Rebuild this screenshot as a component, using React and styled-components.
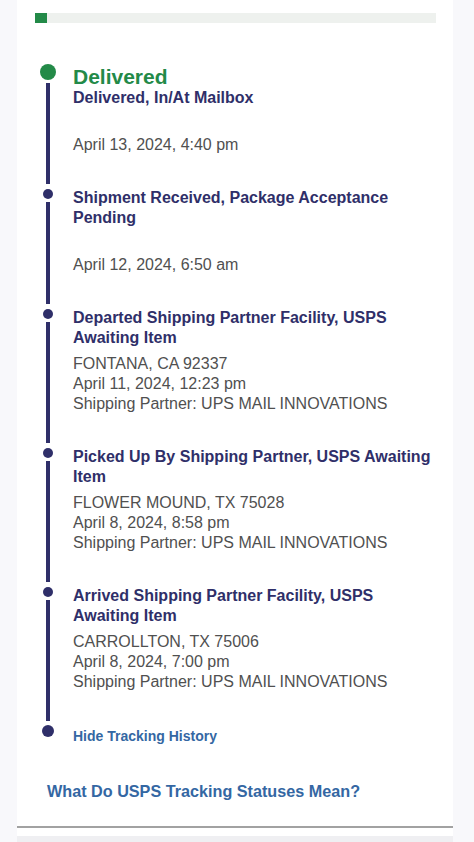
import React from 'react';
import styled, { createGlobalStyle } from 'styled-components';

const GlobalStyle = createGlobalStyle`
  html, body {
    margin: 0;
    padding: 0;
    background: #f8f8fb;
    font-family: "Liberation Sans", Arial, sans-serif;
  }
`;

const events = [
  {
    title: 'Shipment Received, Package Acceptance Pending',
    lines: ['April 12, 2024, 6:50 am'],
    spaced: true,
  },
  {
    title: 'Departed Shipping Partner Facility, USPS Awaiting Item',
    lines: ['FONTANA, CA 92337', 'April 11, 2024, 12:23 pm', 'Shipping Partner: UPS MAIL INNOVATIONS'],
  },
  {
    title: 'Picked Up By Shipping Partner, USPS Awaiting Item',
    lines: ['FLOWER MOUND, TX 75028', 'April 8, 2024, 8:58 pm', 'Shipping Partner: UPS MAIL INNOVATIONS'],
  },
  {
    title: 'Arrived Shipping Partner Facility, USPS Awaiting Item',
    lines: ['CARROLLTON, TX 75006', 'April 8, 2024, 7:00 pm', 'Shipping Partner: UPS MAIL INNOVATIONS'],
  },
];

const App = () => {
  return (
    <>
      <GlobalStyle />
      <Page>
        <Card>
          <Progress>
            <ProgressFill />
          </Progress>

          <Timeline>
            <Row>
              <Rail>
                <Dot $big />
                <Line />
              </Rail>
              <Content $first>
                <Status>Delivered</Status>
                <Title>Delivered, In/At Mailbox</Title>
                <Details $spaced>
                  <span>April 13, 2024, 4:40 pm</span>
                </Details>
              </Content>
            </Row>

            {events.map((ev, i) => (
              <Row key={i}>
                <Rail>
                  <Dot />
                  <Line />
                </Rail>
                <Content>
                  <Title>{ev.title}</Title>
                  <Details $spaced={ev.spaced}>
                    {ev.lines.map(l => (
                      <span key={l}>{l}</span>
                    ))}
                  </Details>
                </Content>
              </Row>
            ))}

            <Row $last>
              <Rail>
                <Dot $end />
              </Rail>
              <HideLink href="#">Hide Tracking History</HideLink>
            </Row>
          </Timeline>

          <StatusLink href="#">What Do USPS Tracking Statuses Mean?</StatusLink>
          <Divider />
        </Card>
      </Page>
    </>
  );
};

const Page = styled.div`
  min-height: 842px;
  display: flex;
  padding-left: 17px;
`;

const Card = styled.div`
  width: 436px;
  background: #ffffff;
  padding: 13px 0 0 0;
  display: flex;
  flex-direction: column;
  min-height: 829px;
`;

const Progress = styled.div`
  margin: 0 17px 0 18px;
  height: 10px;
  background: #eef1ee;
  display: flex;
`;

const ProgressFill = styled.div`
  width: 12px;
  background: #238a48;
`;

const Timeline = styled.div`
  margin-top: 41px;
  padding-left: 23px;
  display: flex;
  flex-direction: column;
`;

const Row = styled.div`
  display: grid;
  grid-template-columns: 16px 1fr;
  column-gap: 17px;
  min-height: ${p => (p.$last ? '24px' : 'auto')};
`;

const Rail = styled.div`
  display: flex;
  flex-direction: column;
  align-items: center;
`;

const Dot = styled.div`
  width: ${p => (p.$big ? 16 : p.$end ? 12 : 10)}px;
  height: ${p => (p.$big ? 16 : p.$end ? 12 : 10)}px;
  margin-top: ${p => (p.$big ? 0 : p.$end ? 0 : 1)}px;
  border-radius: 50%;
  background: ${p => (p.$big ? '#238a48' : '#2f2f69')};
  flex-shrink: 0;
`;

const Line = styled.div`
  width: 4px;
  flex: 1;
  background: #2f2f69;
  margin: 3px 0 4px;
`;

const Content = styled.div`
  display: flex;
  flex-direction: column;
  padding-top: ${p => (p.$first ? 2 : 0)}px;
  padding-bottom: 33px;
  padding-right: 14px;
`;

const Status = styled.div`
  color: #238a48;
  font-weight: 700;
  font-size: 21px;
  line-height: 22px;
`;

const Title = styled.div`
  color: #2f2f69;
  font-weight: 700;
  font-size: 16px;
  line-height: 20px;
`;

const Details = styled.div`
  display: flex;
  flex-direction: column;
  margin-top: ${p => (p.$spaced ? 27 : 6)}px;
  color: #505050;
  font-size: 16px;
  line-height: 20px;

  span {
    display: block;
  }
`;

const HideLink = styled.a`
  color: #3467a3;
  font-weight: 700;
  font-size: 14px;
  line-height: 20px;
  text-decoration: none;
  margin-top: 1px;
`;

const StatusLink = styled.a`
  margin: 30px 0 0 30px;
  color: #3467a3;
  font-weight: 700;
  font-size: 16.2px;
  line-height: 24px;
  text-decoration: none;
`;

const Divider = styled.div`
  margin-top: 23px;
  height: 2px;
  background: #a2a2a2;
  border-bottom: 8px solid #ffffff;
  box-shadow: 0 9px 0 #efeff2;
`;

export default App;
